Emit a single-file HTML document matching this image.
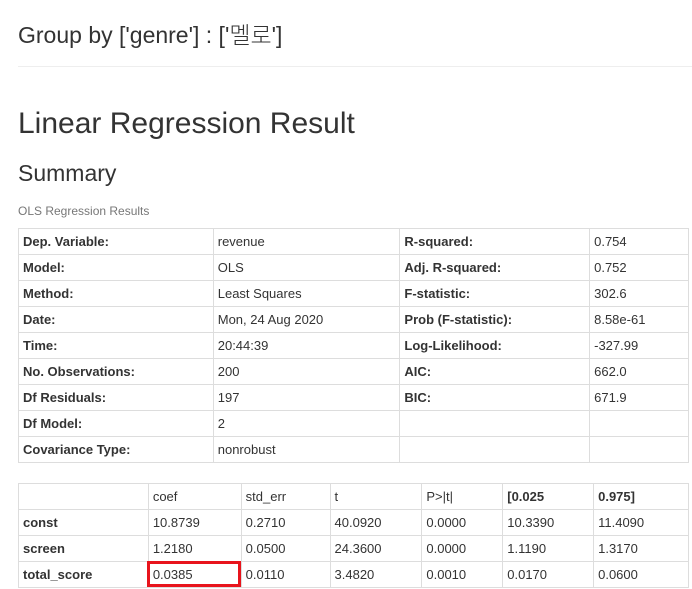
<!DOCTYPE html>
<html><head><meta charset="utf-8"><style>
body{margin:0;width:692px;height:589px;overflow:hidden;background:#fff;font-family:"Liberation Sans","Noto Sans CJK KR",sans-serif;color:#333;position:relative}
.a{position:absolute;white-space:nowrap}
table{position:absolute;border-collapse:collapse;font-size:13px;left:18px}
tr{height:26px}
td{border:1px solid #ddd;padding:0 0 0 4px;line-height:24px;vertical-align:middle}
b{font-weight:bold}
</style></head><body>
<div class="a" style="left:18px;top:16px;font-size:23px;font-weight:300;">Group by ['genre'] : ['멜로']</div>
<div class="a" style="left:18px;top:66px;width:674px;height:1px;background:#eee"></div>
<div class="a" style="left:18px;top:107px;font-size:30px;">Linear Regression Result</div>
<div class="a" style="left:18px;top:160px;font-size:23px;">Summary</div>
<div class="a" style="left:18px;top:204px;font-size:12px;color:#777">OLS Regression Results</div>
<table style="top:228px;width:671px">
<colgroup><col style="width:195px"><col style="width:187px"><col style="width:190px"><col style="width:99px"></colgroup>
<tr><td><b>Dep. Variable:</b></td><td>revenue</td><td><b>R-squared:</b></td><td>0.754</td></tr>
<tr><td><b>Model:</b></td><td>OLS</td><td><b>Adj. R-squared:</b></td><td>0.752</td></tr>
<tr><td><b>Method:</b></td><td>Least Squares</td><td><b>F-statistic:</b></td><td>302.6</td></tr>
<tr><td><b>Date:</b></td><td>Mon, 24 Aug 2020</td><td><b>Prob (F-statistic):</b></td><td>8.58e-61</td></tr>
<tr><td><b>Time:</b></td><td>20:44:39</td><td><b>Log-Likelihood:</b></td><td>-327.99</td></tr>
<tr><td><b>No. Observations:</b></td><td>200</td><td><b>AIC:</b></td><td>662.0</td></tr>
<tr><td><b>Df Residuals:</b></td><td>197</td><td><b>BIC:</b></td><td>671.9</td></tr>
<tr><td><b>Df Model:</b></td><td>2</td><td></td><td></td></tr>
<tr><td><b>Covariance Type:</b></td><td>nonrobust</td><td></td><td></td></tr>
</table>
<table style="top:483px;width:671px">
<colgroup><col style="width:130px"><col style="width:93px"><col style="width:89px"><col style="width:92px"><col style="width:81px"><col style="width:91px"><col style="width:95px"></colgroup>
<tr><td></td><td>coef</td><td>std_err</td><td>t</td><td>P&gt;|t|</td><td><b>[0.025</b></td><td><b>0.975]</b></td></tr>
<tr><td><b>const</b></td><td>10.8739</td><td>0.2710</td><td>40.0920</td><td>0.0000</td><td>10.3390</td><td>11.4090</td></tr>
<tr><td><b>screen</b></td><td>1.2180</td><td>0.0500</td><td>24.3600</td><td>0.0000</td><td>1.1190</td><td>1.3170</td></tr>
<tr><td><b>total_score</b></td><td>0.0385</td><td>0.0110</td><td>3.4820</td><td>0.0010</td><td>0.0170</td><td>0.0600</td></tr>
</table>
<div class="a" style="left:147px;top:561px;width:88px;height:20px;border:3px solid #e8141c"></div>
</body></html>
